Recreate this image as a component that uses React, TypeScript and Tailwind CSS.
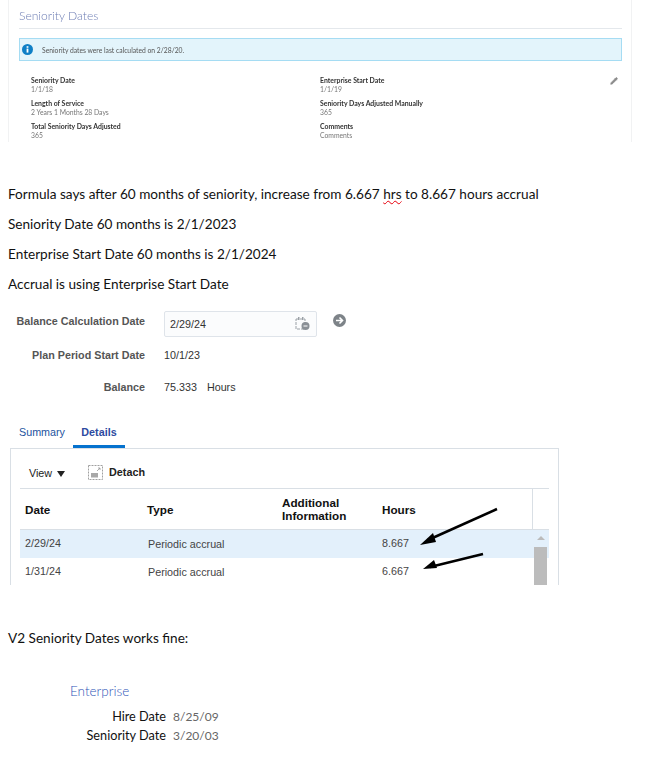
import { Pencil } from 'lucide-react';

const doc = "font-['Lato','Open_Sans',sans-serif]";
const ora = "font-['Liberation_Sans',Arial,sans-serif]";

const seniorityFields = [
  [
    { label: 'Seniority Date', value: '1/1/18' },
    { label: 'Length of Service', value: '2 Years 1 Months 28 Days' },
    { label: 'Total Seniority Days Adjusted', value: '365' },
  ],
  [
    { label: 'Enterprise Start Date', value: '1/1/19' },
    { label: 'Seniority Days Adjusted Manually', value: '365' },
    { label: 'Comments', value: 'Comments' },
  ],
];

const notes = [
  'Seniority Date 60 months is 2/1/2023',
  'Enterprise Start Date 60 months is 2/1/2024',
  'Accrual is using Enterprise Start Date',
];

const rows = [
  { date: '2/29/24', type: 'Periodic accrual', hours: '8.667', selected: true },
  { date: '1/31/24', type: 'Periodic accrual', hours: '6.667', selected: false },
];

function SeniorityCard() {
  return (
    <div className={`ml-2 h-[142px] w-[624px] overflow-hidden border-x border-[#f1f2f3] pl-[10px] pr-[9px] blur-[0.3px] ${doc}`}>
      <div className="flex h-[29px] items-center border-b border-[#e4e8ec] pt-[4px]">
        <h2 className="text-[12.1px] font-light text-[#6f7fb5]">Seniority Dates</h2>
      </div>
      <div className="mt-[9px] flex h-[23px] items-center border border-[#a5dcf3] bg-[#e3f4fb] pl-[2px]">
        <svg width="11" height="11" viewBox="0 0 11 11">
          <circle cx="5.5" cy="5.5" r="5.5" fill="#0f7fc6" />
          <rect x="4.6" y="4.6" width="1.8" height="4" fill="#fff" />
          <rect x="4.6" y="2.2" width="1.8" height="1.6" fill="#fff" />
        </svg>
        <span className="ml-[9px] mt-[2px] text-[6.75px] text-[#555]">Seniority dates were last calculated on 2/28/20.</span>
      </div>
      <div className="relative mt-[15px] flex pl-[12px]">
        {seniorityFields.map((col, i) => (
          <div key={i} className={i === 0 ? 'w-[289px]' : 'flex-1'}>
            {col.map((f) => (
              <div key={f.label} className="mb-[5px] h-[18px]">
                <div className="h-[9px] text-[6.9px] font-bold leading-[9px] text-[#333]">{f.label}</div>
                <div className="h-[9px] text-[6.8px] leading-[9px] text-[#777]">{f.value}</div>
              </div>
            ))}
          </div>
        ))}
        <Pencil className="absolute right-[4px] top-[1px] text-[#8a8a8a]" size={8} fill="#8a8a8a" />
      </div>
    </div>
  );
}

function BalanceForm() {
  return (
    <div className={`mt-[12px] text-[10.75px] text-[#333] ${ora}`}>
      <div className="flex h-[26px] items-start">
        <div className="mt-[2px] w-[145px] text-right font-bold text-[#555]">Balance Calculation Date</div>
        <div className="ml-[19px] flex h-[26px] w-[153px] items-center justify-between rounded-[2px] border border-[#dfe4ea] bg-[#fbfcfd] pl-[5px] pr-[6px] pt-[1px]">
          <span>2/29/24</span>
          <svg width="15" height="15" viewBox="0 0 15 15" className="-mt-[2px]">
            <rect x="1" y="3" width="9" height="10" fill="none" stroke="#9aa0a6" strokeWidth="1" strokeDasharray="3 1" />
            <rect x="3" y="1" width="1.5" height="3" fill="#9aa0a6" />
            <rect x="7" y="1" width="1.5" height="3" fill="#9aa0a6" />
            <circle cx="10.5" cy="10" r="4" fill="#8a9096" />
            <path d="M8.5 10h4" stroke="#fff" strokeWidth="1" />
          </svg>
        </div>
        <svg width="13" height="13" viewBox="0 0 13 13" className="ml-[16px] mt-[3px]">
          <circle cx="6.5" cy="6.5" r="6.5" fill="#7d8388" />
          <path d="M3 6.5h6M6.5 3.5l3 3-3 3" fill="none" stroke="#fff" strokeWidth="1.6" />
        </svg>
      </div>
      <div className="mt-[11px] flex h-[14px] items-center">
        <div className="w-[145px] text-right font-bold text-[#555]">Plan Period Start Date</div>
        <div className="ml-[19px]">10/1/23</div>
      </div>
      <div className="mt-[18px] flex h-[14px] items-center">
        <div className="w-[145px] text-right font-bold text-[#555]">Balance</div>
        <div className="ml-[19px]">75.333</div>
        <div className="ml-[10px]">Hours</div>
      </div>
    </div>
  );
}

function DetailsPanel() {
  return (
    <div className={`relative ${ora}`}>
      <div className="mt-[30px] flex h-[24px] items-start pl-[19px] text-[10.75px]">
        <span className="text-[#23539e]">Summary</span>
        <span className="ml-[8px] flex h-[24px] w-[52px] justify-center border-b-[3px] border-[#0572ce] font-bold text-[#2d4aa0]">Details</span>
      </div>
      <div className="ml-[10px] h-[137px] w-[549px] overflow-hidden border-x border-t border-[#d9dfe5] pl-[9px] pr-[9px]">
        <div className="flex h-[40px] items-center border-b border-[#d9dfe5] pt-[9px] text-[10.75px] text-[#222]">
          <span className="ml-[9px] mt-[1px]">View</span>
          <span className="ml-[5px] mt-[1px] h-0 w-0 border-x-[4px] border-t-[6px] border-x-transparent border-t-[#222]" />
          <svg width="15" height="15" viewBox="0 0 15 15" className="ml-[23px] -mt-[1px]">
            <rect x="0.5" y="0.5" width="14" height="14" fill="none" stroke="#a0a0a0" strokeDasharray="2 1" />
            <rect x="3" y="8" width="7" height="4.5" fill="#a8a8a8" />
            <path d="M9 6l3-3M10 3h2v2" fill="none" stroke="#999" strokeWidth="0.8" />
          </svg>
          <span className="ml-[6px] -mt-[1px] font-bold">Detach</span>
        </div>
        <div className="flex h-[41px] items-center border-b border-[#d9dfe5] text-[11.7px] font-bold leading-[13px] text-[#111]">
          <div className="ml-[5px] w-[122px]">Date</div>
          <div className="w-[135px]">Type</div>
          <div className="w-[100px]">Additional<br />Information</div>
          <div className="w-[150px]">Hours</div>
          <div className="h-full border-l border-[#d9dfe5]" />
        </div>
        <div className="relative text-[10.75px] text-[#444]">
          {rows.map((r) => (
            <div key={r.date} className={`flex h-[28px] items-center ${r.selected ? 'bg-[#e3f0fb]' : ''}`}>
              <div className="ml-[5px] w-[123px] -mt-[1px]">{r.date}</div>
              <div className="w-[234px] mt-[1px]">{r.type}</div>
              <div className="-mt-[1px]">{r.hours}</div>
            </div>
          ))}
          <div className="absolute right-0 top-0 flex h-[56px] w-[17px] flex-col items-center">
            <span className="mt-[6px] h-0 w-0 border-x-[4px] border-b-[4px] border-x-transparent border-b-[#bbb]" />
            <span className="mt-[7px] h-[40px] w-[13px] bg-[#bcbcbc]" />
          </div>
        </div>
      </div>
      {/* annotation arrows drawn on top of the table */}
      <svg width="100" height="80" viewBox="0 0 100 80" className="pointer-events-none absolute left-[410px] top-[83px]">
        <path d="M87 2L18 33" stroke="#000" strokeWidth="2.5" />
        <path d="M10 38L23 26L26 35z" fill="#000" />
        <path d="M73 47L20 60" stroke="#000" strokeWidth="2.5" />
        <path d="M13 62L24 53L27 61z" fill="#000" />
      </svg>
    </div>
  );
}

export default function App() {
  return (
    <div className="h-[768px] w-[650px] overflow-hidden bg-white">
      <SeniorityCard />
      <div className={`mt-[37px] pl-2 text-[13.6px] leading-[30px] text-[#111] ${doc}`}>
        <p>
          Formula says after 60 months of seniority, increase from 6.667{' '}
          <span className="underline decoration-red-600 decoration-wavy decoration-1">hrs</span> to 8.667 hours accrual
        </p>
        {notes.map((n) => (
          <p key={n}>{n}</p>
        ))}
      </div>
      <BalanceForm />
      <DetailsPanel />
      <div className={`mt-[38px] pl-2 text-[13.6px] leading-[30px] text-[#111] ${doc}`}>V2 Seniority Dates works fine:</div>
      <div className={doc}>
        <div className="ml-[70px] mt-[28px] text-[13.5px] font-light leading-[20px] text-[#2f55b8]">Enterprise</div>
        <div className="mt-[6px] flex h-[19px] items-center text-[12.7px]">
          <div className="w-[166px] text-right text-[#111]">Hire Date</div>
          <div className="ml-[7px] text-[12px] text-[#666]">8/25/09</div>
        </div>
        <div className="flex h-[19px] items-center text-[12.7px]">
          <div className="w-[166px] text-right text-[#111]">Seniority Date</div>
          <div className="ml-[7px] text-[12px] text-[#666]">3/20/03</div>
        </div>
      </div>
    </div>
  );
}
